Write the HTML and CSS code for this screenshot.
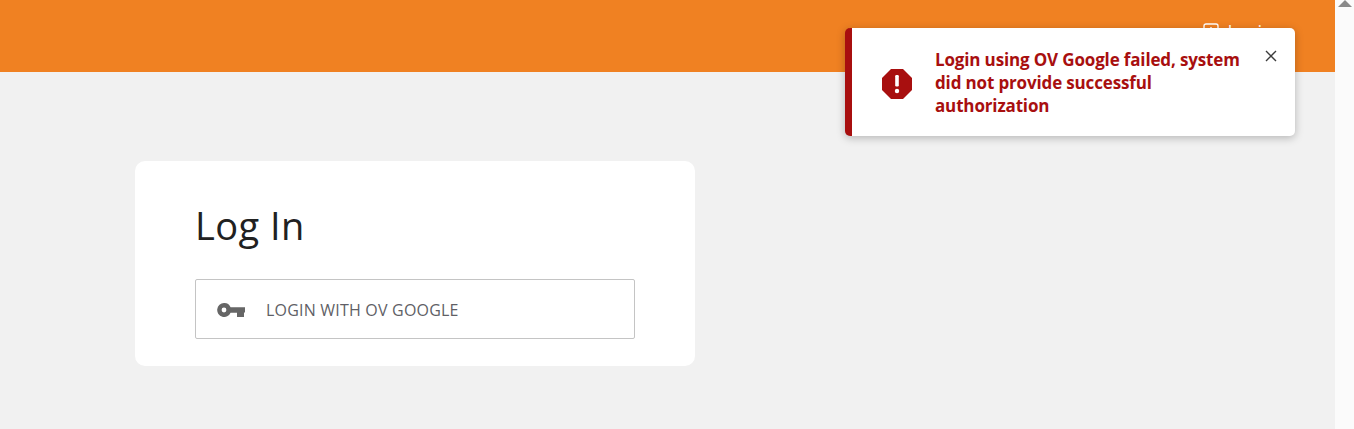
FILE: index.html
```html
<!DOCTYPE html>
<html lang="en">
<head>
  <meta charset="UTF-8" />
  <meta name="viewport" content="width=device-width, initial-scale=1.0"/>
  <title>Log In</title>
  <link rel="stylesheet" href="styles.css">
</head>
<body>

  <div class="page">
    <nav>
      <a href="#" class="nav-login">
        <svg class="nav-icon" viewBox="0 0 16 16" width="16" height="16"><rect x="1" y="1" width="14" height="14" rx="2" fill="none" stroke="#fff" stroke-width="1.4"/><path d="M8 4v7M5 8l3 3 3-3" fill="none" stroke="#fff" stroke-width="1.4"/></svg>
        Login
      </a>
    </nav>

    <main>
      <div class="login-card">
        <h1>Log In</h1>
        <a href="#" class="login-btn">
          <svg class="key-icon" viewBox="0 0 28 14" width="28" height="14">
            <path fill="#666" fill-rule="evenodd" d="M7 0a7 7 0 0 1 6.6 4.2H28v5.4h-1L27 14h-7V9.8h-6.4A7 7 0 1 1 7 0zm0 4.6a2.4 2.4 0 1 0 0 4.8 2.4 2.4 0 0 0 0-4.8z"/>
          </svg>
          <span>LOGIN WITH OV GOOGLE</span>
        </a>
      </div>
    </main>
  </div>

  <div class="scrollbar"><span class="scroll-up"></span></div>

  <!-- error toast -->
  <div class="toast">
    <svg class="toast-icon" viewBox="0 0 32 32" width="32" height="32">
      <path fill="#a80f0f" d="M10 1h12l9 9v12l-9 9H10l-9-9V10z"/>
      <rect x="14.2" y="7" width="3.6" height="11.5" rx="1.2" fill="#fff"/>
      <circle cx="16" cy="23" r="2.2" fill="#fff"/>
    </svg>
    <p class="toast-msg">Login using OV Google failed, system did not provide successful authorization</p>
    <svg class="toast-close" viewBox="0 0 12 12" width="12" height="12"><path d="M1 1l10 10M11 1L1 11" stroke="#3c3c3c" stroke-width="1.4" fill="none"/></svg>
  </div>

</body>
</html>
```

FILE: styles.css
```css
* { box-sizing: border-box; margin: 0; padding: 0; font-family: "Open Sans", "Noto Sans", Arial, sans-serif; }
html, body { height: 100%; overflow: hidden; }
body { display: flex; background-color: #f1f1f1; color: #212121; }

.page {
  flex: 1;
  display: flex;
  flex-direction: column;
}

nav {
  height: 72px;
  background-color: #f08122;
  display: flex;
  justify-content: flex-end;
  padding: 23px 62px 0 0;
}
.nav-login {
  display: flex;
  gap: 8px;
  color: white;
  text-decoration: none;
  font-size: 18px;
  line-height: 16px;
  height: 24px;
}

main {
  flex: 1;
  padding: 89px 135px 0;
}

.login-card {
  width: 560px;
  height: 205px;
  background-color: white;
  border-radius: 10px;
  padding: 40px 60px;
}
.login-card h1 {
  font-size: 38px;
  font-weight: 400;
  line-height: 48px;
  margin-bottom: 30px;
  letter-spacing: 0.45px;
}

.login-btn {
  display: flex;
  align-items: center;
  gap: 21px;
  height: 60px;
  padding: 1px 0 0 21px;
  border: 1px solid #c4c4c4;
  border-radius: 2px;
  color: #5f5f66;
  font-size: 16px;
  letter-spacing: 0.2px;
  text-decoration: none;
}

.scrollbar {
  width: 19px;
  background-color: #fbfbfb;
  display: flex;
  justify-content: center;
}
.scroll-up {
  width: 0;
  height: 0;
  border-left: 7px solid transparent;
  border-right: 7px solid transparent;
  border-bottom: 7px solid #8a8a8a;
}

.toast {
  position: absolute;
  left: 845px;
  top: 28px;
  width: 450px;
  height: 108px;
  background-color: white;
  border-left: 7px solid #a80f0f;
  border-radius: 5px;
  box-shadow: 0 2px 8px rgba(0,0,0,0.25);
  display: flex;
  padding: 20px 0 0 29px;
}
.toast-icon { margin-top: 20px; flex-shrink: 0; }
.toast-msg {
  width: 312px;
  margin-left: 22px;
  color: #a80f0f;
  font-size: 17px;
  font-weight: 700;
  line-height: 23px;
  letter-spacing: -0.15px;
}
.toast-close { position: absolute; right: 18px; top: 22px; }
```
